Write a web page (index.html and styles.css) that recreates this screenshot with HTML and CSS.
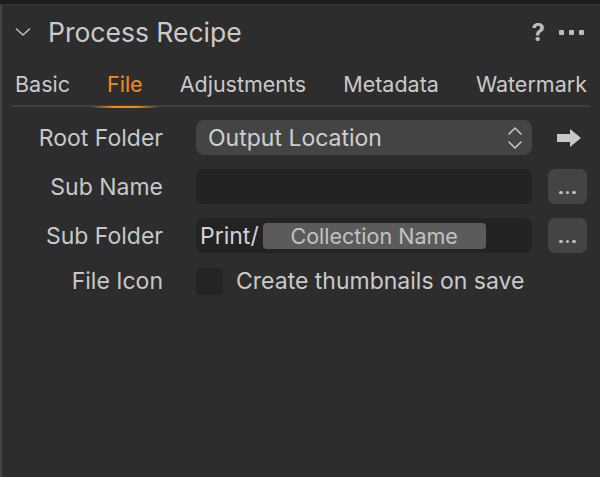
FILE: index.html
```html
<!DOCTYPE html>
<html>

<head>
  <title>Process Recipe</title>
  <meta name="viewport" content="width=device-width, initial-scale=1" />
  <link rel="stylesheet" href="styles.css">
</head>

<body>
  <div class="topbar"></div>

  <div class="panel">
    <div class="header">
      <svg class="chevron" width="16" height="10" viewBox="0 0 16 10">
        <path d="M1.5 2 L8 8 L14.5 2" fill="none" stroke="#bdbdbd" stroke-width="1.6" stroke-linecap="round" stroke-linejoin="round" />
      </svg>
      <span class="title">Process Recipe</span>
      <span class="help">?</span>
      <span class="more">
        <i></i><i></i><i></i>
      </span>
    </div>

    <div class="tabs">
      <span class="tab">Basic</span>
      <span class="tab active">File</span>
      <span class="tab">Adjustments</span>
      <span class="tab">Metadata</span>
      <span class="tab">Watermark</span>
    </div>

    <div class="form">
      <label>Root Folder</label>
      <div class="select">
        <span>Output Location</span>
        <svg width="16" height="26" viewBox="0 0 16 26">
          <path d="M2 9 L8 3 L14 9" fill="none" stroke="#c4c4c4" stroke-width="1.6" stroke-linecap="round" stroke-linejoin="round" />
          <path d="M2 17 L8 23 L14 17" fill="none" stroke="#c4c4c4" stroke-width="1.6" stroke-linecap="round" stroke-linejoin="round" />
        </svg>
      </div>
      <div class="go">
        <svg width="26" height="18" viewBox="0 0 26 18">
          <path d="M1 5 H14 V0 L25 9 L14 18 V13 H1 Z" fill="#c8c8c8" />
        </svg>
      </div>

      <label>Sub Name</label>
      <div class="field"></div>
      <div class="btn"><i></i><i></i><i></i></div>

      <label>Sub Folder</label>
      <div class="field">
        <span class="prefix">Print/</span>
        <span class="token">Collection Name</span>
      </div>
      <div class="btn"><i></i><i></i><i></i></div>

      <label>File Icon</label>
      <div class="check">
        <span class="box"></span>
        <span>Create thumbnails on save</span>
      </div>
      <div></div>
    </div>
  </div>
</body>

</html>
```

FILE: styles.css
```css
html,
body {
  margin: 0;
  padding: 0;
  width: 600px;
  height: 477px;
  overflow: hidden;
  background-color: #2d2d2d;
  font-family: Inter, "Open Sans", sans-serif;
  color: #c9c9c9;
}

.topbar {
  height: 4px;
  background-color: #1d1d1d;
  border-bottom: 1px solid #353535;
}

.panel {
  height: 472px;
  border-left: 2px solid #464646;
  box-sizing: border-box;
}

.header {
  display: flex;
  align-items: center;
  height: 54px;
  padding: 0 16px 0 13px;
}

.chevron {
  margin-right: 17px;
}

.title {
  flex: 1;
  font-size: 26.5px;
  color: #cacaca;
}

.help {
  font-size: 24px;
  font-weight: 700;
  margin-right: 14px;
  color: #bdbdbd;
}

.more {
  display: flex;
  gap: 5px;
}

.more i {
  display: block;
  width: 5px;
  height: 5px;
  border-radius: 1px;
  background-color: #bdbdbd;
}

.tabs {
  display: flex;
  justify-content: space-between;
  margin: 0 10px 0 10px;
  padding: 0 3px 0 3px;
  height: 46px;
  align-items: center;
  border-bottom: 2px solid #3e3e3e;
}

.tab {
  font-size: 21.5px;
  color: #c9c9c9;
  position: relative;
  padding-top: 3px;
}

.tab.active {
  color: #f28b1e;
}

.tab.active::after {
  content: "";
  position: absolute;
  left: -17px;
  right: -17px;
  bottom: -11px;
  height: 2px;
  background: linear-gradient(90deg, rgba(242, 139, 30, 0), #f28b1e 35%, #f28b1e 65%, rgba(242, 139, 30, 0));
}

.form {
  display: grid;
  grid-template-columns: 178px 336px 39px;
  column-gap: 16px;
  row-gap: 14px;
  margin-top: 13px;
  align-items: center;
}

.form label {
  text-align: right;
  font-size: 23px;
  padding-right: 17px;
  color: #c8c8c8;
}

.select {
  height: 35px;
  background-color: #444;
  border-radius: 8px;
  display: flex;
  align-items: center;
  justify-content: space-between;
  padding: 0 9px 0 12px;
  font-size: 23px;
  color: #cfcfcf;
}

.go {
  display: flex;
  justify-content: center;
  padding-left: 3px;
}

.field {
  height: 35px;
  background-color: #232323;
  border-radius: 7px;
  display: flex;
  align-items: center;
  padding: 0 4px;
  font-size: 23px;
}

.prefix {
  color: #d2d2d2;
}

.token {
  margin-left: 4px;
  width: 223px;
  height: 26px;
  line-height: 26px;
  text-align: center;
  background-color: #5b5b5b;
  border-radius: 4px;
  font-size: 21.5px;
  color: #c2c2c2;
}

.btn {
  height: 35px;
  background-color: #444;
  border-radius: 7px;
  display: flex;
  align-items: flex-end;
  justify-content: center;
  gap: 3px;
  padding-bottom: 10px;
  box-sizing: border-box;
}

.btn i {
  display: block;
  width: 3.5px;
  height: 3.5px;
  border-radius: 50%;
  background-color: #bdbdbd;
}

.check {
  display: flex;
  align-items: center;
  gap: 13px;
  font-size: 23px;
}

.box {
  width: 27px;
  height: 27px;
  background-color: #242424;
  border-radius: 4px;
}
```
